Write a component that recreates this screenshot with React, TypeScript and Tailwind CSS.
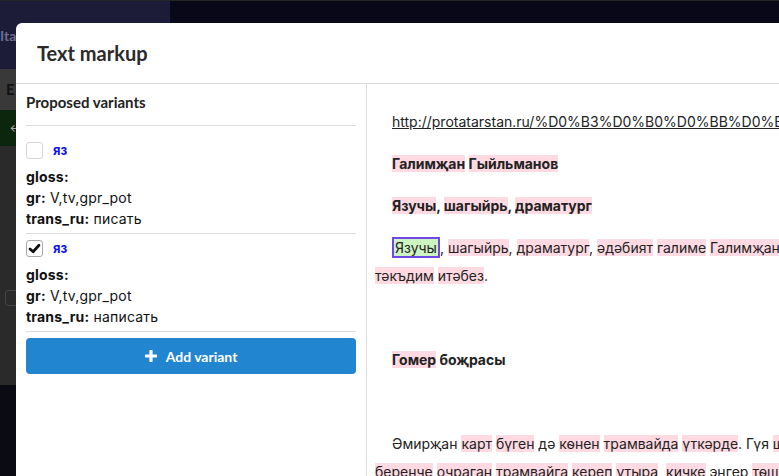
import React from 'react';

// --- Data ---
const variants = [
  { word: 'яз', gr: 'V,tv,gpr_pot', trans: 'писать', checked: false },
  { word: 'яз', gr: 'V,tv,gpr_pot', trans: 'написать', checked: true },
];

const Hl: React.FC<{ children: React.ReactNode }> = ({ children }) => (
  <span className="bg-[#ffdae3]">{children}</span>
);

const Check: React.FC<{ checked: boolean }> = ({ checked }) => (
  <div
    className={`w-[17px] h-[17px] rounded-[3px] border flex items-center justify-center bg-white ${
      checked ? 'border-[#a8a8a8]' : 'border-[#d4d4d5]'
    }`}
  >
    {checked && (
      <svg width="13" height="13" viewBox="0 0 16 16">
        <path d="M2.5 8.5 L6.3 12 L13.5 4" fill="none" stroke="#111" strokeWidth="3.4" strokeLinecap="round" strokeLinejoin="round" />
      </svg>
    )}
  </div>
);

export default function App() {
  return (
    <div className="relative w-[779px] h-[476px] overflow-hidden bg-[#0b0b14] flex flex-col font-['Lato',sans-serif]">
      {/* page behind the modal */}
      <div className="h-[1px] bg-[#262626]" />
      <div className="h-[68px] flex">
        <div className="w-[170px] bg-[#1c1c38] flex items-center text-[14px] font-bold text-[#6c6c8c]">Itatar</div>
        <div className="flex-1 bg-[#080818]" />
      </div>
      <div className="h-[41px] bg-[#393939] flex items-center pl-[6px] text-[15px] font-bold text-[#111]">E</div>
      <div className="h-[36px] bg-[#0c260e] flex items-center pl-[10px] text-[12px] text-[#bbb]">←</div>
      <div className="h-[239px] bg-[#2a2a2a] pt-[144px] pl-[5px]">
        <div className="w-[20px] h-[16px] rounded-[3px] border border-[#444]" />
      </div>
      <div className="flex-1 bg-[#0b0b14]" />

      {/* modal */}
      <div className="absolute left-[16px] top-[23px] w-[1000px] h-[460px] bg-white rounded-tl-[6px] flex flex-col text-[#222]">
        <div className="h-[61px] shrink-0 flex items-center pl-[21px] border-b border-[#dcdcdc] text-[20px] font-bold text-[#2a2a2a]">
          Text markup
        </div>

        <div className="flex flex-1 min-h-0">
          {/* Left: variants */}
          <div className="w-[351px] shrink-0 border-r border-[#dcdcdc] px-[10px]">
            <div className="pt-[8px] pb-[13px] text-[15px] leading-[20px] font-bold text-[#222] border-b border-[#dcdcdc]">
              Proposed variants
            </div>
            <div className="pt-[10px] font-['Inter',sans-serif] text-[14px]">
              {variants.map((v, i) => (
                <div key={i} className="pt-[6px] pb-[4px] border-b border-[#dcdcdc]">
                  <div className="flex items-center gap-[10px] h-[17px]">
                    <Check checked={v.checked} />
                    <span className="text-[13px] font-bold text-[#1010f0]">{v.word}</span>
                  </div>
                  <div className="mt-[7px] leading-[21px] text-[#111] tracking-[0.2px]">
                    <div><b>gloss:</b></div>
                    <div><b>gr:</b> {v.gr}</div>
                    <div><b>trans_ru:</b> {v.trans}</div>
                  </div>
                </div>
              ))}
            </div>
            <button className="mt-[6px] w-full h-[36px] rounded-[4px] bg-[#2185d0] text-white text-[14px] font-bold flex items-center justify-center gap-[9px]">
              <svg width="12" height="12" viewBox="0 0 12 12">
                <path d="M6 1 V11 M1 6 H11" stroke="#fff" strokeWidth="3.2" strokeLinecap="round" />
              </svg>
              Add variant
            </button>
          </div>

          {/* Right: text */}
          <div className="flex-1 pt-[24px] pl-[8px] font-['Inter',sans-serif] text-[14px] leading-[28px] text-[#222] whitespace-nowrap indent-[17px]">
            <p className="mb-[14px]">
              <span className="underline">http://protatarstan.ru/%D0%B3%D0%B0%D0%BB%D0%B8%D0%BC%D2%97%D0%B0%D0%BD</span>
            </p>
            <p className="mb-[14px] font-bold">
              <Hl>Галимҗан</Hl> <Hl>Гыйльманов</Hl>
            </p>
            <p className="mb-[14px] font-bold">
              <Hl>Язучы</Hl>, <Hl>шагыйрь</Hl>, <Hl>драматург</Hl>
            </p>
            <p className="mb-[14px]">
              <span className="bg-[#cdf5c2] border-2 border-[#7048e8] px-[1px]">Язучы</span>, <Hl>шагыйрь</Hl>, <Hl>драматург</Hl>,{' '}
              <Hl>әдәбият</Hl> <Hl>галиме</Hl> <Hl>Галимҗан</Hl> <Hl>Гыйльманов</Hl> <Hl>иҗатын</Hl>
              <br />
              <Hl>тәкъдим</Hl> <Hl>итәбез</Hl>.
            </p>
            <p className="mb-[14px]">&nbsp;</p>
            <p className="mb-[14px] font-bold">
              <Hl>Гомер</Hl> боҗрасы
            </p>
            <p className="mb-[14px]">&nbsp;</p>
            <p className="mb-[14px]">
              Әмирҗан <Hl>карт</Hl> <Hl>бүген</Hl> дә <Hl>көнен</Hl> <Hl>трамвайда</Hl> <Hl>үткәрде</Hl>. Гүя <Hl>шуның</Hl> <Hl>өчен</Hl>
              <br />
              <Hl>беренче</Hl> <Hl>очраган</Hl> <Hl>трамвайга</Hl> <Hl>кереп</Hl> <Hl>утыра</Hl>, <Hl>кичке</Hl> эңгер <Hl>төшкәч</Hl>
            </p>
          </div>
        </div>
      </div>
    </div>
  );
}
